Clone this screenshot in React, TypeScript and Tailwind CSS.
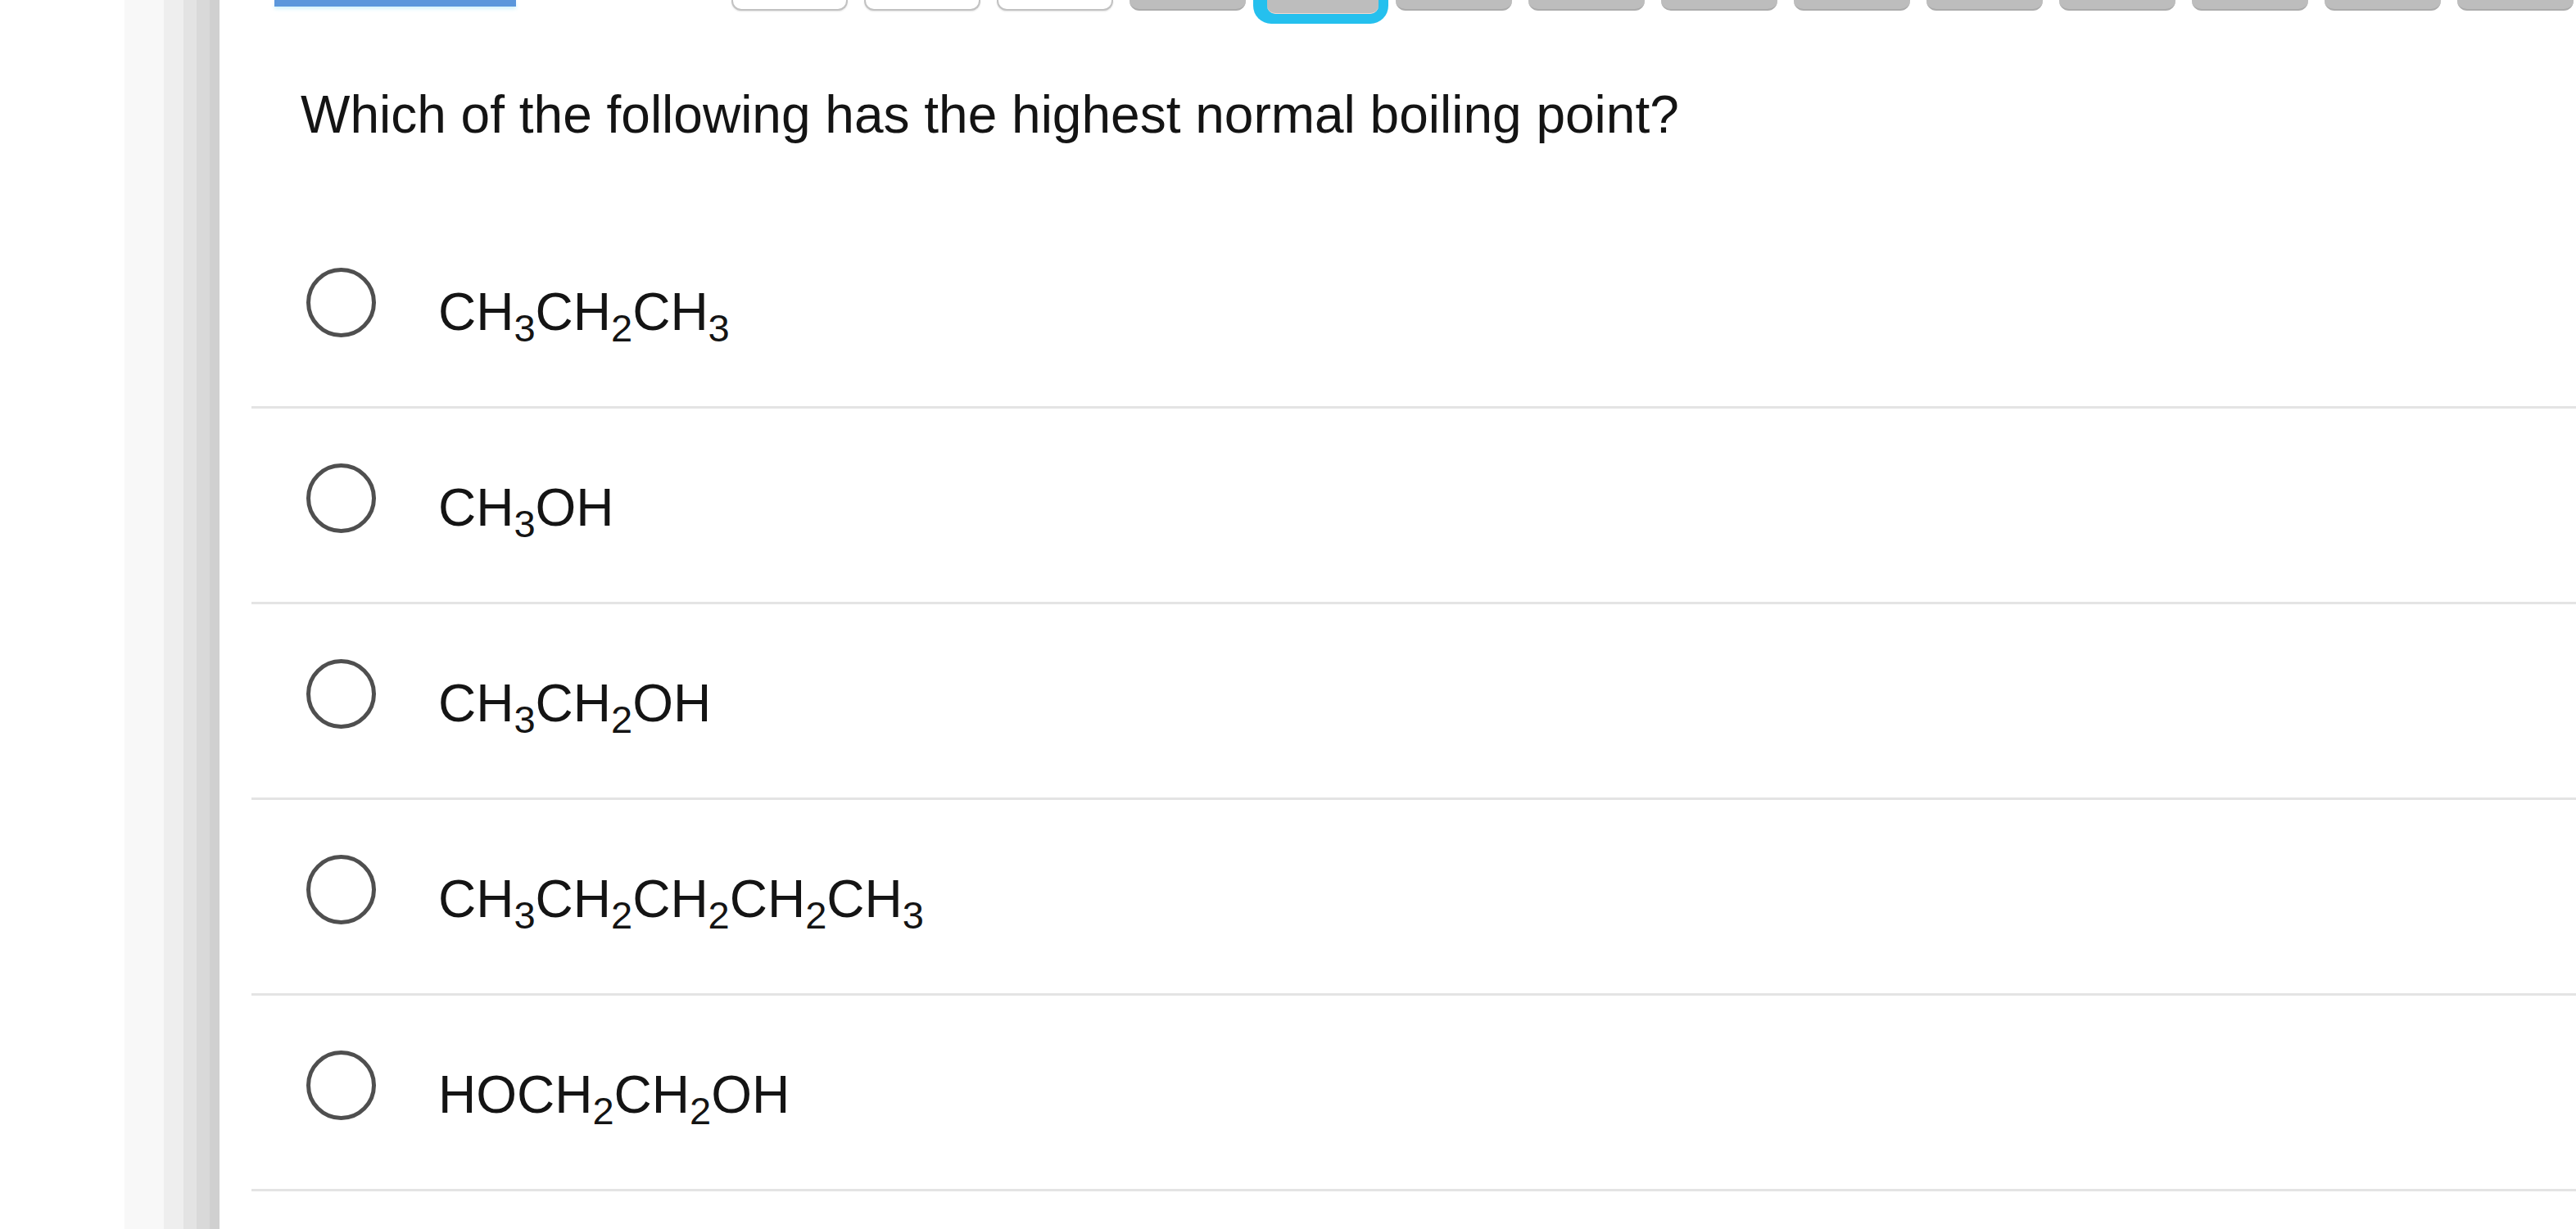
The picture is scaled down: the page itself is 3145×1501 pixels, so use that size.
import React from "react";

type Part = { t: string; sub?: boolean };

const parse = (s: string): Part[] => {
  const out: Part[] = [];
  for (const ch of s) {
    const sub = /[0-9]/.test(ch);
    const last = out[out.length - 1];
    if (last && !!last.sub === sub) last.t += ch;
    else out.push({ t: ch, sub });
  }
  return out;
};

const options = [
  "CH3CH2CH3",
  "CH3OH",
  "CH3CH2OH",
  "CH3CH2CH2CH2CH3",
  "HOCH2CH2OH",
];

const buttons = Array.from({ length: 14 }, (_, i) => i);

function NavButton({ i }: { i: number }) {
  if (i < 3) {
    return (
      <div className="w-[142px] h-[13px] shrink-0 bg-white border-x-2 border-b-2 border-[#c2c2c2] rounded-b-[12px] shadow-[0_1px_2px_rgba(0,0,0,0.12)]" />
    );
  }
  if (i === 4) {
    return (
      <div className="w-[165px] h-[29px] shrink-0 -mx-[11px] bg-[#25c0ee] rounded-b-[22px] pl-[17px] pr-[12px] pb-[12px]">
        <div className="w-full h-full bg-[#bdbdbd] rounded-b-[10px] border-b border-[#f3d9d0]" />
      </div>
    );
  }
  return (
    <div className="w-[142px] h-[13px] shrink-0 bg-[#bdbdbd] border-b-2 border-[#ababab] rounded-b-[12px]" />
  );
}

export default function App() {
  return (
    <div
      className="w-[3145px] h-[1501px] bg-white flex overflow-hidden text-[#141414]"
      style={{ fontFamily: '"Liberation Sans", Arial, Helvetica, sans-serif' }}
    >
      {/* left page edge */}
      <div className="w-[152px] shrink-0 bg-white" />
      <div className="w-[48px] shrink-0 bg-[#f8f8f8]" />
      <div className="w-[24px] shrink-0 bg-[#eeeeee]" />
      <div className="w-[16px] shrink-0 bg-[#e3e3e3]" />
      <div className="w-[16px] shrink-0 bg-[#d9d9d9]" />
      <div className="w-[12px] shrink-0 bg-[#d0d0d0]" />

      {/* main */}
      <div className="flex-1 flex flex-col min-w-0">
        {/* header strip */}
        <div className="h-[29px] flex items-start shrink-0">
          <div className="ml-[67px] w-[295px] h-[8px] bg-[#5b97dc] shrink-0 shadow-[0_3px_4px_rgba(180,235,250,0.6)]" />
          <div className="ml-[263px] flex items-start gap-[20px]">
            {buttons.map((i) => (
              <NavButton key={i} i={i} />
            ))}
          </div>
        </div>

        <div className="ml-[39px] flex flex-col">
          <div className="pt-[79px] pl-[60px] text-[64px] leading-none h-[143px] whitespace-nowrap">
            Which of the following has the highest normal boiling point?
          </div>

          <div className="mt-[88px] flex flex-col">
            {options.map((o) => (
              <div
                key={o}
                className="h-[239px] flex items-start border-b-[3px] border-[#e4e4e4]"
              >
                <div className="ml-[67px] mt-[67px] w-[85px] h-[85px] shrink-0 rounded-full border-[5px] border-[#4f4f4f]" />
                <div className="ml-[76px] mt-[89px] text-[64px] leading-none whitespace-nowrap">
                  {parse(o).map((p, idx) =>
                    p.sub ? (
                      <span key={idx} className="text-[47px] leading-none align-[-14px]">
                        {p.t}
                      </span>
                    ) : (
                      <span key={idx}>{p.t}</span>
                    )
                  )}
                </div>
              </div>
            ))}
          </div>
        </div>
      </div>
    </div>
  );
}
